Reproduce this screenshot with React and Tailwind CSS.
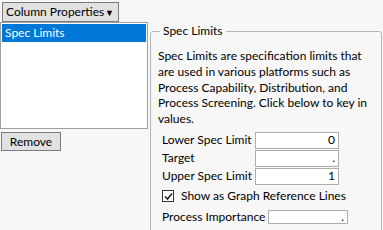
export default function App() {
  return (
    <div className="w-[383px] h-[230px] overflow-hidden bg-[#f7f7f7] text-[12px] text-black font-['Lato',sans-serif] leading-none whitespace-nowrap">
      {/* top dropdown */}
      <div className="pt-[2px] pl-[2px] h-[22px]">
        <button className="flex items-center h-[20px] w-[117px] border border-[#7a7a7a] bg-[#e1e1e1] pl-[3px] pr-[4px] justify-between">
          <span>Column Properties</span>
          <span className="text-[9px]">▼</span>
        </button>
      </div>

      <div className="flex">
        {/* left column */}
        <div className="w-[148px] shrink-0">
          <div className="h-[107px] border border-[#a0a0a0] bg-white p-px">
            <div className="h-[18px] bg-[#0078d7] text-white flex items-center pl-[3px]">Spec Limits</div>
          </div>
          <button className="mt-[3px] ml-px h-[19px] w-[60px] border border-[#7a7a7a] bg-[#e1e1e1] flex items-center justify-center">
            Remove
          </button>
        </div>

        {/* right group */}
        <fieldset className="ml-[2px] mt-[3px] w-[232px] h-[230px] min-w-0 border border-[#b5b5b5] rounded-[3px] px-[7px] pt-[11px]">
          <legend className="px-[3px] ml-[2px] font-normal">Spec Limits</legend>
          <p className="leading-[15.75px]">
            Spec Limits are specification limits that
            <br />
            are used in various platforms such as
            <br />
            Process Capability, Distribution, and
            <br />
            Process Screening. Click below to key in
            <br />
            values.
          </p>
          <div className="mt-[5px] ml-[4px] flex flex-col gap-px">
            {[
              ["Lower Spec Limit", "0"],
              ["Target", "."],
              ["Upper Spec Limit", "1"],
            ].map(([label, val]) => (
              <div key={label} className="flex items-center">
                <span className="w-[93px]">{label}</span>
                <div className="w-[84px] h-[17px] border border-[#adadad] bg-white flex items-center justify-end pr-[3px]">{val}</div>
              </div>
            ))}
          </div>
          <label className="mt-[5px] ml-[4px] flex items-center gap-[7px] h-[13px]">
            <span className="w-[12px] h-[12px] border border-[#333] bg-white flex items-center justify-center">
              <svg width="9" height="9" viewBox="0 0 9 9">
                <path d="M1 4.5 L3.5 7 L8 1.5" fill="none" stroke="#222" strokeWidth="1.6" />
              </svg>
            </span>
            <span>Show as Graph Reference Lines</span>
          </label>
          <div className="mt-[7px] ml-[4px] flex items-center">
            <span className="w-[106px]">Process Importance</span>
            <div className="w-[80px] h-[14px] border border-[#adadad] bg-white flex items-center justify-end pr-[3px]">.</div>
          </div>
        </fieldset>
      </div>
    </div>
  );
}
